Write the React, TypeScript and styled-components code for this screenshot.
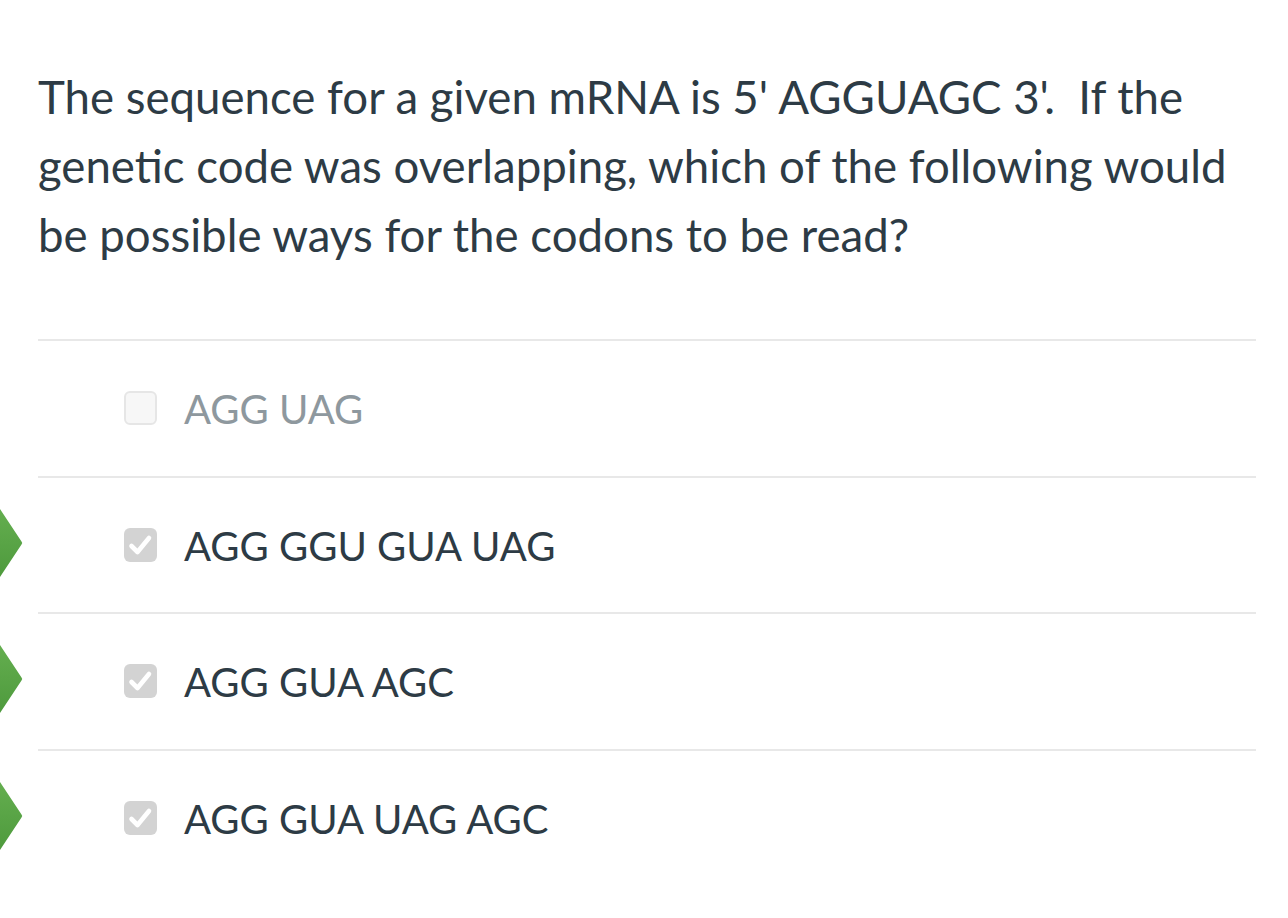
import React from "react";
import styled, { createGlobalStyle } from "styled-components";

const Global = createGlobalStyle`
  html, body { margin: 0; padding: 0; background: #ffffff; }
  body { font-family: Lato, "Open Sans", sans-serif; color: #2d3b45; }
`;

const Page = styled.div`
  padding: 62px 32px 0 38px;
  width: 1288px;
  box-sizing: border-box;
`;

const Question = styled.p`
  margin: 0 0 70px 0;
  font-size: 45.6px;
  line-height: 69px;
  color: #2d3b45;
`;

const Answers = styled.div`
  display: flex;
  flex-direction: column;
`;

const Row = styled.div`
  position: relative;
  height: 136.5px;
  box-sizing: border-box;
  border-top: 2px solid #e8e8e8;
  display: flex;
  align-items: center;
  padding-left: 86px;
  gap: 27px;
`;

const Box = styled.span<{ $checked: boolean }>`
  width: 33px;
  height: 34px;
  box-sizing: border-box;
  border-radius: 6px;
  display: flex;
  align-items: center;
  justify-content: center;
  background: ${(p) => (p.$checked ? "#d3d3d3" : "#f7f7f7")};
  border: ${(p) => (p.$checked ? "none" : "2px solid #e6e6e6")};
`;

const Label = styled.span<{ $checked: boolean }>`
  font-size: 40px;
  line-height: 48px;
  color: ${(p) => (p.$checked ? "#2d3b45" : "#8e989e")};
  margin-top: 2px;
`;

const Marker = styled.svg`
  position: absolute;
  left: -38px;
  top: 50%;
  transform: translateY(-50%);
  margin-top: -2px;
`;

const answers = [
  { text: "AGG UAG", checked: false, correct: false },
  { text: "AGG GGU GUA UAG", checked: true, correct: true },
  { text: "AGG GUA AGC", checked: true, correct: true },
  { text: "AGG GUA UAG AGC", checked: true, correct: true },
];

function Arrow() {
  return (
    <Marker width="24" height="72" viewBox="0 0 24 72">
      <defs>
        <linearGradient id="g" x1="0" y1="0" x2="0" y2="1">
          <stop offset="0" stopColor="#64ae4f" />
          <stop offset="1" stopColor="#4e9a3d" />
        </linearGradient>
      </defs>
      <path d="M0 2 L21.5 34.5 Q23 36 21.5 37.5 L0 70 Z" fill="url(#g)" />
    </Marker>
  );
}

function Check() {
  return (
    <svg width="33" height="34" viewBox="0 0 33 34">
      <path
        d="M7.5 18 L13.5 24 L25 10"
        fill="none"
        stroke="#ffffff"
        strokeWidth="4.6"
        strokeLinecap="round"
        strokeLinejoin="round"
      />
    </svg>
  );
}

export default function App() {
  return (
    <>
      <Global />
      <Page>
        <Question>
          The sequence for a given mRNA is 5' AGGUAGC 3'.&nbsp; If the genetic code was overlapping, which of the following would be possible ways for the codons to be read?
        </Question>
        <Answers>
          {answers.map((a) => (
            <Row key={a.text}>
              {a.correct && <Arrow />}
              <Box $checked={a.checked}>{a.checked && <Check />}</Box>
              <Label $checked={a.checked}>{a.text}</Label>
            </Row>
          ))}
        </Answers>
      </Page>
    </>
  );
}
